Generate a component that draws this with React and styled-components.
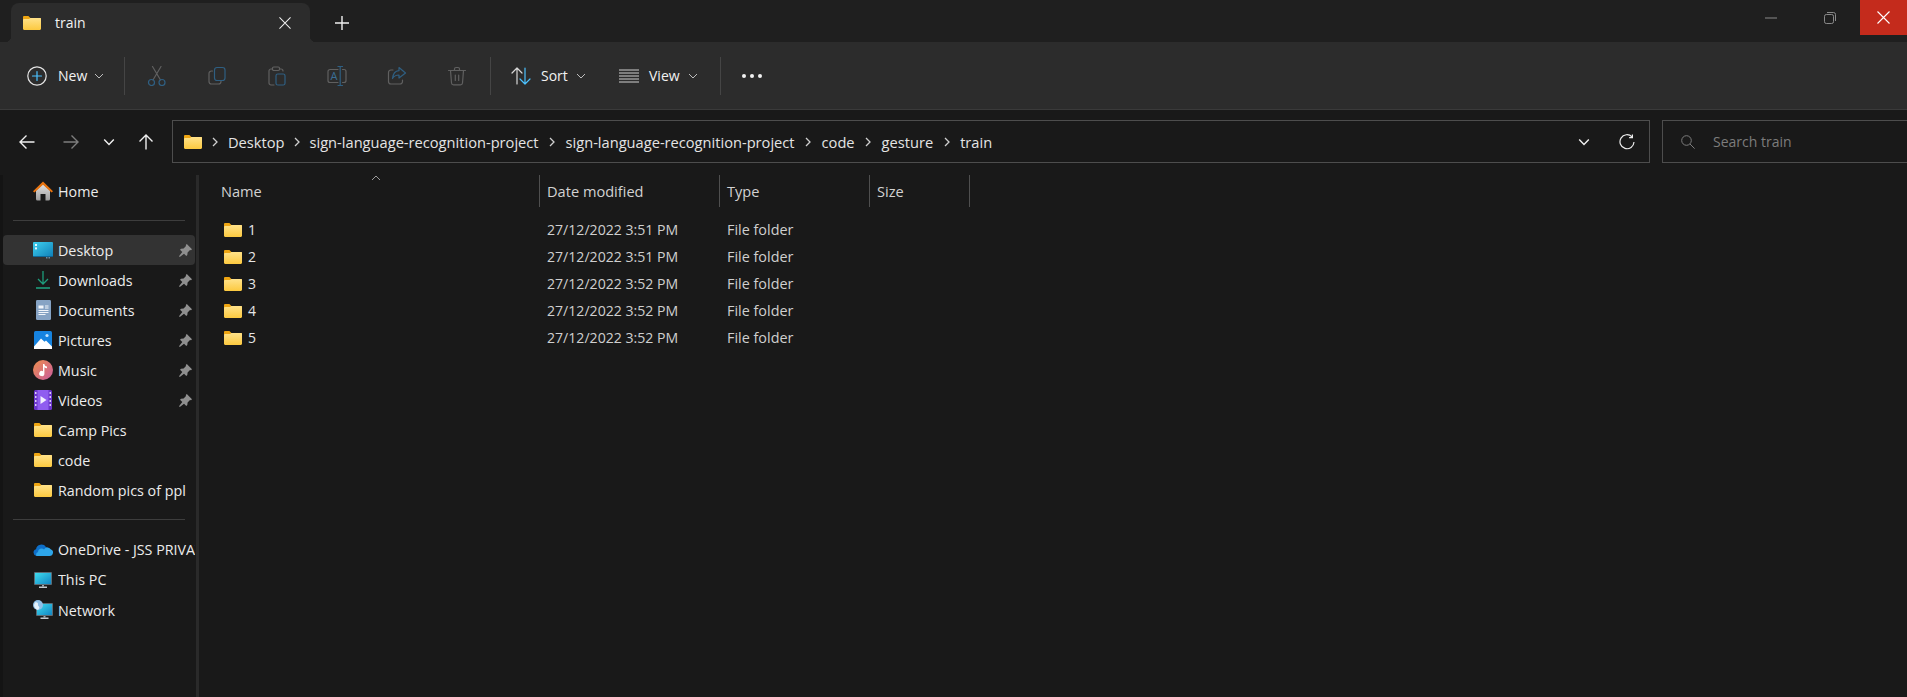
import React from 'react';
import styled, { createGlobalStyle } from 'styled-components';

const GlobalStyle = createGlobalStyle`
  html, body {
    margin: 0;
    height: 100%;
    background: #191919;
  }
  #root {
    height: 100%;
  }
`;

const Window = styled.div`
  width: 1907px;
  height: 697px;
  display: flex;
  flex-direction: column;
  overflow: hidden;
  background: #191919;
  color: #e6e6e6;
  font-family: "Open Sans", "Noto Sans", sans-serif;
  font-size: 14px;
`;

const TitleBar = styled.div`
  height: 42px;
  flex-shrink: 0;
  display: flex;
  background: #1f1f1f;
  padding-left: 11px;
`;

const Tab = styled.div`
  position: relative;
  width: 299px;
  height: 39px;
  margin-top: 3px;
  padding: 0 19px 0 12px;
  box-sizing: border-box;
  display: flex;
  align-items: center;
  gap: 14px;
  background: #2c2c2c;
  border-radius: 8px 8px 0 0;
  color: #f2f2f2;
  &::before, &::after {
    content: '';
    position: absolute;
    bottom: 0;
    width: 6px;
    height: 6px;
  }
  &::before {
    left: -6px;
    background: radial-gradient(circle at 0 0, transparent 6px, #2c2c2c 6.5px);
  }
  &::after {
    right: -6px;
    background: radial-gradient(circle at 100% 0, transparent 6px, #2c2c2c 6.5px);
  }
`;

const TabLabel = styled.span`
  flex: 1;
`;

const NewTab = styled.div`
  width: 20px;
  margin: 3px 0 0 22px;
  display: flex;
  align-items: center;
  justify-content: center;
`;

const WindowControls = styled.div`
  margin-left: auto;
  display: flex;
  align-items: flex-start;
`;

const WindowButton = styled.div`
  width: ${p => p.$width}px;
  height: 35px;
  display: flex;
  align-items: center;
  justify-content: center;
  background: ${p => (p.$close ? '#c42b1c' : 'transparent')};
`;

const Toolbar = styled.div`
  height: 68px;
  flex-shrink: 0;
  box-sizing: border-box;
  display: flex;
  align-items: center;
  background: #2c2c2c;
  border-bottom: 1px solid #3a3a3a;
`;

const ToolSeparator = styled.div`
  width: 1px;
  height: 38px;
  margin-left: ${p => p.$left || 0}px;
  margin-right: ${p => p.$right || 0}px;
  background: #454545;
`;

const MenuButton = styled.div`
  width: ${p => p.$width}px;
  padding-left: ${p => p.$pad}px;
  box-sizing: border-box;
  flex-shrink: 0;
  display: flex;
  align-items: center;
  color: #f2f2f2;
`;

const MenuLabel = styled.span`
  margin-left: ${p => p.$gap}px;
  margin-right: ${p => p.$after}px;
`;

const IconButton = styled.div`
  width: 60px;
  display: flex;
  justify-content: center;
`;

const NavRow = styled.div`
  height: 65px;
  flex-shrink: 0;
  display: flex;
  align-items: flex-start;
  padding-top: 10px;
  box-sizing: border-box;
`;

const NavButtons = styled.div`
  width: 172px;
  height: 43px;
  flex-shrink: 0;
  display: flex;
  align-items: center;
`;

const NavButton = styled.div`
  width: ${p => p.$width}px;
  display: flex;
  justify-content: center;
`;

const AddressBar = styled.div`
  width: 1478px;
  height: 43px;
  flex-shrink: 0;
  box-sizing: border-box;
  display: flex;
  align-items: center;
  padding: 0 14px 0 11px;
  border: 1px solid #4d4d4d;
`;

const Crumb = styled.span`
  color: #e4e4e4;
  font-size: 14.65px;
`;

const CrumbArrow = styled.span`
  width: ${p => p.$width}px;
  display: flex;
  justify-content: center;
`;

const AddressTools = styled.div`
  margin-left: auto;
  display: flex;
  align-items: center;
  gap: 29px;
`;

const SearchBox = styled.div`
  width: 300px;
  height: 43px;
  margin-left: 12px;
  flex-shrink: 0;
  box-sizing: border-box;
  display: flex;
  align-items: center;
  gap: 18px;
  padding-left: 18px;
  border: 1px solid #4d4d4d;
  color: #7c7c7c;
`;

const Content = styled.div`
  flex: 1;
  display: flex;
  min-height: 0;
`;

const Sidebar = styled.nav`
  width: 199px;
  flex-shrink: 0;
  box-sizing: border-box;
  padding-top: 1px;
  border-left: 3px solid #141414;
  border-right: 3px solid #2a2a2a;
  font-size: 14.3px;
`;

const NavItem = styled.div`
  height: ${p => p.$height || 30}px;
  margin-right: 1px;
  display: flex;
  align-items: center;
  padding-left: 30px;
  border-radius: 4px;
  background: ${p => (p.$active ? '#333333' : 'transparent')};
`;

const NavIcon = styled.span`
  width: 20px;
  height: 20px;
  flex-shrink: 0;
  display: flex;
  align-items: center;
  justify-content: center;
`;

const NavLabel = styled.span`
  flex: 1;
  margin-left: 5px;
  white-space: nowrap;
  overflow: hidden;
  color: #ececec;
`;

const Pin = styled.span`
  display: flex;
  margin-right: 3px;
`;

const NavDivider = styled.div`
  height: 1px;
  margin: 14px 11px 14px 10px;
  background: #3d3d3d;
`;

const Main = styled.main`
  flex: 1;
`;

const HeaderRow = styled.div`
  position: relative;
  height: 32px;
  display: grid;
  grid-template-columns: 341px 180px 150px 100px;
  margin-bottom: 9px;
`;

const HeaderCell = styled.div`
  display: flex;
  align-items: center;
  padding-left: ${p => p.$pad}px;
  border-right: 1px solid #4f4f4f;
  color: #d2d2d2;
  font-size: 14.6px;
`;

const SortCaret = styled.svg`
  position: absolute;
  left: 172px;
  top: 0;
`;

const FileRow = styled.div`
  height: 27px;
  display: grid;
  grid-template-columns: 341px 180px 150px 100px;
  align-items: center;
`;

const NameCell = styled.div`
  display: flex;
  align-items: center;
  gap: 6px;
  padding-left: 25px;
  color: #e6e6e6;
`;

const FileCell = styled.div`
  padding-left: 7px;
  color: #cfcfcf;
  font-size: ${p => p.$size}px;
`;

const BLUE = '#2f5f82';
const GREY = '#606060';

const Folder = ({ w = 18, h = 14 }) => (
  <svg width={w} height={h} viewBox="0 0 18 14">
    <defs>
      <linearGradient id="folderFill" x1="0" y1="0" x2="0" y2="1">
        <stop offset="0" stopColor="#ffe28a" />
        <stop offset="1" stopColor="#fcc93f" />
      </linearGradient>
    </defs>
    <path d="M0 1.2C0 .5.5 0 1.2 0h4.2L7.4 2H17c.6 0 1 .4 1 1v2H0z" fill="#eea512" />
    <path d="M0 4.2c0-.7.5-1.2 1.2-1.2H6l1.4-1H17c.6 0 1 .4 1 1v9.8c0 .7-.5 1.2-1.2 1.2H1.2C.5 14 0 13.5 0 12.8z" fill="url(#folderFill)" />
  </svg>
);

const Chevron = ({ size = 10, color = '#bdbdbd', width = 1 }) => (
  <svg width={size} height={size} viewBox="0 0 10 10">
    <path d="M1 3l4 4 4-4" fill="none" stroke={color} strokeWidth={width} />
  </svg>
);

const CrumbChevron = () => (
  <svg width="6" height="10" viewBox="0 0 6 10">
    <path d="M1 1l4 4-4 4" fill="none" stroke="#cfcfcf" strokeWidth="1.3" />
  </svg>
);

const Stroke = ({ size = 20, children }) => (
  <svg width={size} height={size} viewBox="0 0 20 20" fill="none" strokeWidth="1.2" strokeLinecap="round" strokeLinejoin="round">
    {children}
  </svg>
);

const NewIcon = () => (
  <Stroke>
    <circle cx="10" cy="10" r="9.2" stroke="#e4e4e4" />
    <path d="M10 5.5v9M5.5 10h9" stroke="#4cc2ff" />
  </Stroke>
);

const CutIcon = () => (
  <Stroke>
    <path d="M5.5 0.5l8 13.5M14 0.5L6 14" stroke={GREY} />
    <circle cx="4.5" cy="16.5" r="3" stroke={BLUE} />
    <circle cx="15" cy="16.5" r="3" stroke={BLUE} />
  </Stroke>
);

const CopyIcon = () => (
  <Stroke>
    <path d="M5.5 5H4.5a2.5 2.5 0 0 0-2.5 2.5v8A2.5 2.5 0 0 0 4.5 18h7a2.5 2.5 0 0 0 2.5-2.5V15" stroke={GREY} />
    <rect x="7.5" y="1.5" width="10.5" height="13" rx="2.5" stroke={BLUE} />
  </Stroke>
);

const PasteIcon = () => (
  <Stroke>
    <path d="M7 19H4a2 2 0 0 1-2-2V5a2 2 0 0 1 2-2h1.5M12.5 3H14a2 2 0 0 1 2 2" stroke={GREY} />
    <rect x="5.5" y="1" width="7" height="3.5" rx="1.2" stroke={GREY} />
    <rect x="9" y="8" width="9" height="11" rx="1.8" stroke={BLUE} />
  </Stroke>
);

const RenameIcon = () => (
  <Stroke>
    <path d="M11 3.5H3a2 2 0 0 0-2 2v9a2 2 0 0 0 2 2h8M15.5 3.5H17a2 2 0 0 1 2 2v9a2 2 0 0 1-2 2h-1.5" stroke={GREY} />
    <path d="M11 .5h4.5M11 19.5h4.5M13.2 .5v19" stroke={BLUE} />
    <text x="3.4" y="14" fontFamily="Open Sans, sans-serif" fontSize="11" fill="#3a6f96" stroke="none">A</text>
  </Stroke>
);

const ShareIcon = () => (
  <Stroke>
    <path d="M6 4H4a2.5 2.5 0 0 0-2.5 2.5v9A2.5 2.5 0 0 0 4 18h9a2.5 2.5 0 0 0 2.5-2.5V14" stroke={GREY} />
    <path d="M12 1.5L18.5 7 12 12V9c-3 0-5 1-6.5 3.5C6 8 8 5 12 4.7z" stroke={BLUE} />
  </Stroke>
);

const DeleteIcon = () => (
  <Stroke>
    <path d="M1.5 4.5h17M7.5 4.5V3a1.5 1.5 0 0 1 1.5-1.5h2A1.5 1.5 0 0 1 12.5 3v1.5M3.5 4.5l1 12.5a2 2 0 0 0 2 1.8h7a2 2 0 0 0 2-1.8l1-12.5M8.3 9v5.5M11.7 9v5.5" stroke={GREY} />
  </Stroke>
);

const SortIcon = () => (
  <Stroke>
    <path d="M6 18V2M1 7l5-5 5 5" stroke="#d8d8d8" />
    <path d="M14 2v16M9 13l5 5 5-5" stroke="#4cc2ff" />
  </Stroke>
);

const ViewIcon = () => (
  <svg width="20" height="14" viewBox="0 0 20 14">
    <path d="M0 1h20M0 4h20M0 7h20M0 10h20M0 13h20" stroke="#cfcfcf" strokeWidth="1" />
  </svg>
);

const MoreIcon = () => (
  <svg width="20" height="4" viewBox="0 0 20 4">
    <circle cx="2" cy="2" r="2" fill="#f2f2f2" />
    <circle cx="10" cy="2" r="2" fill="#f2f2f2" />
    <circle cx="18" cy="2" r="2" fill="#f2f2f2" />
  </svg>
);

const CloseIcon = ({ size = 13, color = '#ffffff' }) => (
  <svg width={size} height={size} viewBox="0 0 13 13">
    <path d="M.5.5l12 12M12.5.5l-12 12" stroke={color} strokeWidth="1.1" />
  </svg>
);

const PlusIcon = () => (
  <svg width="14" height="14" viewBox="0 0 14 14">
    <path d="M7 0v14M0 7h14" stroke="#f0f0f0" strokeWidth="1.4" />
  </svg>
);

const MinimizeIcon = () => (
  <svg width="12" height="2" viewBox="0 0 12 2">
    <path d="M0 1h12" stroke="#8a8a8a" strokeWidth="1" />
  </svg>
);

const RestoreIcon = () => (
  <svg width="12" height="12" viewBox="0 0 12 12" fill="none">
    <rect x=".5" y="2.5" width="9" height="9" rx="1.8" stroke="#8a8a8a" />
    <path d="M3 .5h6.5a2 2 0 0 1 2 2V9" stroke="#8a8a8a" />
  </svg>
);

const Arrow = ({ dir, color }) => {
  const rotate = { left: 0, right: 180, up: 90 }[dir];
  return (
    <svg width="16" height="16" viewBox="0 0 16 16" style={{ transform: `rotate(${rotate}deg)` }}>
      <path d="M15.5 8H1M7.5 1.5L1 8l6.5 6.5" fill="none" stroke={color} strokeWidth="1.4" />
    </svg>
  );
};

const RefreshIcon = () => (
  <svg width="16" height="16" viewBox="0 0 16 16" fill="none">
    <path d="M13 2.8A7 7 0 1 0 15 8" stroke="#ececec" strokeWidth="1.2" />
    <path d="M13.4.4v3.3h-3.3" stroke="#ececec" strokeWidth="1.2" />
  </svg>
);

const SearchIcon = () => (
  <svg width="14" height="14" viewBox="0 0 14 14" fill="none">
    <circle cx="5.5" cy="5.5" r="4.8" stroke="#7c7c7c" />
    <path d="M9 9l4.6 4.6" stroke="#7c7c7c" />
  </svg>
);

const PinIcon = () => (
  <svg width="13" height="13" viewBox="0 0 13 13">
    <path d="M7.8 0L13 5.2l-1 1-1-.2-2.4 2.4-.3 2.6-1 1-2.3-2.3L.8 13 0 12.2l3.3-4.2L1 5.7l1-1 2.6-.3L7 2l-.2-1z" fill="#8f8f8f" />
  </svg>
);

const HomeIcon = () => (
  <svg width="20" height="20" viewBox="0 0 20 20">
    <defs>
      <linearGradient id="homeBody" x1="0" y1="0" x2="0" y2="1">
        <stop offset="0" stopColor="#e2e2e2" />
        <stop offset="1" stopColor="#9c9c9c" />
      </linearGradient>
    </defs>
    <path d="M3 9.5L10 3l7 6.5V18a1.5 1.5 0 0 1-1.5 1.5h-3V13h-5v6.5h-3A1.5 1.5 0 0 1 3 18z" fill="url(#homeBody)" />
    <path d="M0 10.2L10 .5l10 9.7-1.4 1.3L10 3.7 1.4 11.5z" fill="#e8730f" />
  </svg>
);

const DesktopIcon = () => (
  <svg width="20" height="17" viewBox="0 0 20 17">
    <defs>
      <linearGradient id="desk" x1="0" y1="0" x2="1" y2="1">
        <stop offset="0" stopColor="#3fd0ee" />
        <stop offset="1" stopColor="#0f7fb8" />
      </linearGradient>
    </defs>
    <rect x="0" y="0" width="20" height="15" rx="1" fill="url(#desk)" />
    <path d="M0 15h20v-.8H0z" fill="#0b5c8c" />
    <rect x="2" y="2" width="2" height="2" fill="#e5fbff" />
    <rect x="2" y="5.4" width="2" height="2" fill="#e5fbff" />
    <rect x="13" y="15" width="1.5" height="1.5" fill="#6b8ca0" />
    <rect x="15.5" y="15" width="1.5" height="1.5" fill="#6b8ca0" />
  </svg>
);

const DownloadIcon = () => (
  <svg width="14" height="18" viewBox="0 0 14 18" fill="none">
    <path d="M7 0v12.5M2 8l5 5 5-5" stroke="#1d9d7c" strokeWidth="1.3" />
    <path d="M0 17h14" stroke="#1d9d7c" strokeWidth="1.6" />
  </svg>
);

const DocumentIcon = () => (
  <svg width="15" height="20" viewBox="0 0 15 20">
    <rect width="15" height="20" rx="1.2" fill="#86a3c4" />
    <rect x="2.5" y="5.5" width="5" height="3" fill="#f1f5fa" />
    <path d="M9 6h3.5M9 8h3.5M2.5 10.5h10M2.5 12.5h10M2.5 14.5h7" stroke="#f1f5fa" strokeWidth="1" />
  </svg>
);

const PicturesIcon = () => (
  <svg width="18" height="18" viewBox="0 0 18 18">
    <rect width="18" height="18" rx="1.5" fill="#1683e0" />
    <circle cx="13" cy="4.5" r="1.6" fill="#bfe3ff" />
    <path d="M0 15.5L7 7.5l3.5 3.2L12 9.5l6 6V18H0z" fill="#ffffff" />
  </svg>
);

const MusicIcon = () => (
  <svg width="20" height="20" viewBox="0 0 20 20">
    <defs>
      <linearGradient id="music" x1="0" y1="0" x2="1" y2="1">
        <stop offset="0" stopColor="#ed8e4c" />
        <stop offset="1" stopColor="#c95c9e" />
      </linearGradient>
    </defs>
    <circle cx="10" cy="10" r="10" fill="url(#music)" />
    <path d="M10 4h1.4c.2 1.6 1 2.3 2.6 2.6v1.6c-1 0-1.9-.3-2.6-.9v6.2a2.6 2.6 0 1 1-1.4-2.3z" fill="#ffffff" />
  </svg>
);

const VideosIcon = () => (
  <svg width="18" height="20" viewBox="0 0 18 20">
    <rect width="18" height="20" rx="1.5" fill="#6a35cc" />
    <rect x="3.5" y="0" width="11" height="20" fill="#8f5cf0" />
    <path d="M1 2h1.5v2H1zM1 6h1.5v2H1zM1 10h1.5v2H1zM1 14h1.5v2H1zM15.5 2H17v2h-1.5zM15.5 6H17v2h-1.5zM15.5 10H17v2h-1.5zM15.5 14H17v2h-1.5z" fill="#d9ccf7" />
    <path d="M6.5 6l6 4-6 4z" fill="#f2edff" />
  </svg>
);

const OneDriveIcon = () => (
  <svg width="20" height="13" viewBox="0 0 20 13">
    <path d="M3.5 13A3.5 3.5 0 0 1 3 6.2 5.5 5.5 0 0 1 13 4a4.5 4.5 0 0 1 3 2.2L8 13z" fill="#0e6fc9" />
    <path d="M3.5 13h13a3.5 3.5 0 0 0 1.2-6.8A4 4 0 0 0 11 6.5 3.5 3.5 0 0 0 5 9a3 3 0 0 0-1.5 4z" fill="#2ea6ea" />
  </svg>
);

const MonitorIcon = () => (
  <svg width="18" height="16" viewBox="0 0 18 16">
    <defs>
      <linearGradient id="monitor" x1="0" y1="0" x2="1" y2="1">
        <stop offset="0" stopColor="#3fdcee" />
        <stop offset="1" stopColor="#1186c4" />
      </linearGradient>
    </defs>
    <rect width="18" height="13" rx="1" fill="#5b6b75" />
    <rect x="1" y="1" width="16" height="11" fill="url(#monitor)" />
    <path d="M8 13h2v1.5H8z" fill="#9aa5ad" />
    <path d="M5 14.5h8V16H5z" fill="#c2c9ce" />
  </svg>
);

const NetworkIcon = () => (
  <svg width="20" height="20" viewBox="0 0 20 20">
    <rect x="3" y="3" width="17" height="13" rx="1" fill="#5b6b75" />
    <rect x="4" y="4" width="15" height="11" fill="url(#monitor)" />
    <path d="M10.5 16h2v1.5h-2z" fill="#9aa5ad" />
    <path d="M7.5 17.5h8V19h-8z" fill="#c2c9ce" />
    <circle cx="5" cy="5" r="5" fill="#8fc0e8" />
    <path d="M2 2.5c2-.8 3.5.5 3 2-.6 1.4 1.5 1.7 1.5 3.5L5 10C2.5 9.5 1 7 1 5z" fill="#e4f1fb" />
  </svg>
);

const pinned = [
  { label: 'Desktop', icon: <DesktopIcon />, active: true },
  { label: 'Downloads', icon: <DownloadIcon /> },
  { label: 'Documents', icon: <DocumentIcon /> },
  { label: 'Pictures', icon: <PicturesIcon /> },
  { label: 'Music', icon: <MusicIcon /> },
  { label: 'Videos', icon: <VideosIcon /> },
];

const places = ['Camp Pics', 'code', 'Random pics of ppl'];

const drives = [
  { label: 'OneDrive - JSS PRIVATE', icon: <OneDriveIcon /> },
  { label: 'This PC', icon: <MonitorIcon />, height: 31 },
  { label: 'Network', icon: <NetworkIcon /> },
];

const crumbs = [
  { label: 'Desktop', arrow: 26 },
  { label: 'sign-language-recognition-project', arrow: 25 },
  { label: 'sign-language-recognition-project', arrow: 27 },
  { label: 'code', arrow: 27 },
  { label: 'gesture', arrow: 27 },
  { label: 'train', arrow: 27 },
];

const files = [
  { name: '1', date: '27/12/2022 3:51 PM' },
  { name: '2', date: '27/12/2022 3:51 PM' },
  { name: '3', date: '27/12/2022 3:52 PM' },
  { name: '4', date: '27/12/2022 3:52 PM' },
  { name: '5', date: '27/12/2022 3:52 PM' },
];

const actions = [CutIcon, CopyIcon, PasteIcon, RenameIcon, ShareIcon, DeleteIcon];

export default function App() {
  return (
    <Window>
      <GlobalStyle />
      <TitleBar>
        <Tab>
          <Folder />
          <TabLabel>train</TabLabel>
          <CloseIcon size={12} color="#f0f0f0" />
        </Tab>
        <NewTab><PlusIcon /></NewTab>
        <WindowControls>
          <WindowButton $width={58}><MinimizeIcon /></WindowButton>
          <WindowButton $width={60}><RestoreIcon /></WindowButton>
          <WindowButton $width={47} $close><CloseIcon /></WindowButton>
        </WindowControls>
      </TitleBar>

      <Toolbar>
        <MenuButton $width={124} $pad={27}>
          <NewIcon />
          <MenuLabel $gap={11} $after={7}>New</MenuLabel>
          <Chevron />
        </MenuButton>
        <ToolSeparator $right={2} />
        {actions.map((Icon, i) => (
          <IconButton key={i}><Icon /></IconButton>
        ))}
        <ToolSeparator $left={3} />
        <MenuButton $width={119} $pad={20}>
          <SortIcon />
          <MenuLabel $gap={10} $after={8}>Sort</MenuLabel>
          <Chevron />
        </MenuButton>
        <MenuButton $width={110} $pad={9}>
          <ViewIcon />
          <MenuLabel $gap={10} $after={8}>View</MenuLabel>
          <Chevron />
        </MenuButton>
        <ToolSeparator />
        <MenuButton $width={60} $pad={21}>
          <MoreIcon />
        </MenuButton>
      </Toolbar>

      <NavRow>
        <NavButtons>
          <NavButton $width={54}><Arrow dir="left" color="#f0f0f0" /></NavButton>
          <NavButton $width={34}><Arrow dir="right" color="#7d7d7d" /></NavButton>
          <NavButton $width={42}><Chevron size={12} color="#f0f0f0" width={1.2} /></NavButton>
          <NavButton $width={32}><Arrow dir="up" color="#f0f0f0" /></NavButton>
        </NavButtons>
        <AddressBar>
          <Folder />
          {crumbs.map((c, i) => (
            <React.Fragment key={i}>
              <CrumbArrow $width={c.arrow}><CrumbChevron /></CrumbArrow>
              <Crumb>{c.label}</Crumb>
            </React.Fragment>
          ))}
          <AddressTools>
            <Chevron size={12} color="#f0f0f0" width={1.2} />
            <RefreshIcon />
          </AddressTools>
        </AddressBar>
        <SearchBox>
          <SearchIcon />
          Search train
        </SearchBox>
      </NavRow>

      <Content>
        <Sidebar>
          <NavItem>
            <NavIcon><HomeIcon /></NavIcon>
            <NavLabel>Home</NavLabel>
          </NavItem>
          <NavDivider />
          {pinned.map(item => (
            <NavItem key={item.label} $active={item.active}>
              <NavIcon>{item.icon}</NavIcon>
              <NavLabel>{item.label}</NavLabel>
              <Pin><PinIcon /></Pin>
            </NavItem>
          ))}
          {places.map(label => (
            <NavItem key={label}>
              <NavIcon><Folder /></NavIcon>
              <NavLabel>{label}</NavLabel>
            </NavItem>
          ))}
          <NavDivider />
          {drives.map(item => (
            <NavItem key={item.label} $height={item.height}>
              <NavIcon>{item.icon}</NavIcon>
              <NavLabel>{item.label}</NavLabel>
            </NavItem>
          ))}
        </Sidebar>

        <Main>
          <HeaderRow>
            <HeaderCell $pad={22}>Name</HeaderCell>
            <HeaderCell $pad={7}>Date modified</HeaderCell>
            <HeaderCell $pad={7}>Type</HeaderCell>
            <HeaderCell $pad={7}>Size</HeaderCell>
            <SortCaret width="10" height="6" viewBox="0 0 10 6">
              <path d="M1 5l4-4 4 4" fill="none" stroke="#9a9a9a" />
            </SortCaret>
          </HeaderRow>
          {files.map(f => (
            <FileRow key={f.name}>
              <NameCell><Folder />{f.name}</NameCell>
              <FileCell $size={14.1}>{f.date}</FileCell>
              <FileCell $size={14.4}>File folder</FileCell>
            </FileRow>
          ))}
        </Main>
      </Content>
    </Window>
  );
}
